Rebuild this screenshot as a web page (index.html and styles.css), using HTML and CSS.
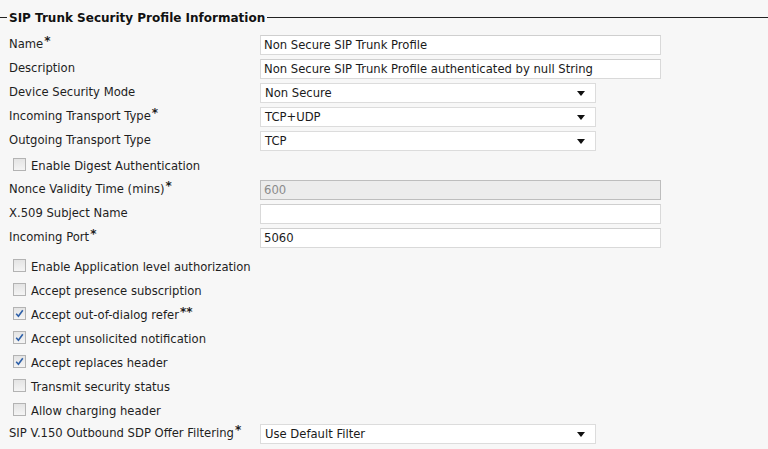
FILE: index.html
```html
<!DOCTYPE html>
<html>
<head>
<meta charset="utf-8">
<link rel="stylesheet" href="styles.css">
</head>
<body>
<div class="page">
  <div class="legend">
    <span class="lead-line"></span>
    <span class="legend-text">SIP Trunk Security Profile Information</span>
    <span class="fill-line"></span>
  </div>
  <div class="form">
    <div class="row r-field">
      <div class="label">Name<sup>*</sup></div>
      <div class="input">Non Secure SIP Trunk Profile</div>
    </div>
    <div class="row r-field">
      <div class="label">Description</div>
      <div class="input">Non Secure SIP Trunk Profile authenticated by null String</div>
    </div>
    <div class="row r-field">
      <div class="label">Device Security Mode</div>
      <div class="select"><span>Non Secure</span><i class="arrow"></i></div>
    </div>
    <div class="row r-field">
      <div class="label">Incoming Transport Type<sup>*</sup></div>
      <div class="select"><span>TCP+UDP</span><i class="arrow"></i></div>
    </div>
    <div class="row r-field">
      <div class="label">Outgoing Transport Type</div>
      <div class="select"><span>TCP</span><i class="arrow"></i></div>
    </div>
    <div class="row r-check r-digest">
      <span class="cb"></span><span class="cb-text">Enable Digest Authentication</span>
    </div>
    <div class="row r-field">
      <div class="label">Nonce Validity Time (mins)<sup>*</sup></div>
      <div class="input disabled">600</div>
    </div>
    <div class="row r-field">
      <div class="label">X.509 Subject Name</div>
      <div class="input"></div>
    </div>
    <div class="row r-field">
      <div class="label">Incoming Port<sup>*</sup></div>
      <div class="input">5060</div>
    </div>
    <div class="checks">
      <div class="row r-check"><span class="cb"></span><span class="cb-text">Enable Application level authorization</span></div>
      <div class="row r-check"><span class="cb"></span><span class="cb-text">Accept presence subscription</span></div>
      <div class="row r-check"><span class="cb checked"><svg viewBox="0 0 13 13" width="13" height="13"><path d="M3.2 6.8 L5.4 9.2 L9.8 3.2" fill="none" stroke="#2d5fa8" stroke-width="1.6"/></svg></span><span class="cb-text">Accept out-of-dialog refer<sup>**</sup></span></div>
      <div class="row r-check"><span class="cb checked"><svg viewBox="0 0 13 13" width="13" height="13"><path d="M3.2 6.8 L5.4 9.2 L9.8 3.2" fill="none" stroke="#2d5fa8" stroke-width="1.6"/></svg></span><span class="cb-text">Accept unsolicited notification</span></div>
      <div class="row r-check"><span class="cb checked"><svg viewBox="0 0 13 13" width="13" height="13"><path d="M3.2 6.8 L5.4 9.2 L9.8 3.2" fill="none" stroke="#2d5fa8" stroke-width="1.6"/></svg></span><span class="cb-text">Accept replaces header</span></div>
      <div class="row r-check"><span class="cb"></span><span class="cb-text">Transmit security status</span></div>
      <div class="row r-check"><span class="cb"></span><span class="cb-text">Allow charging header</span></div>
    </div>
    <div class="row r-last">
      <div class="label">SIP V.150 Outbound SDP Offer Filtering<sup>*</sup></div>
      <div class="select"><span>Use Default Filter</span><i class="arrow"></i></div>
    </div>
  </div>
</div>
</body>
</html>
```
FILE: styles.css
```css
html, body {
  margin: 0;
  padding: 0;
  background: #f7f7f7;
}
body {
  width: 768px;
  height: 449px;
  overflow: hidden;
  font-family: "DejaVu Sans", Verdana, sans-serif;
  font-size: 11.6px;
  color: #1e1e1e;
}
.page {
  padding-top: 9px;
}
.legend {
  display: flex;
  align-items: center;
  height: 17px;
}
.lead-line {
  width: 7px;
  height: 1px;
  background: #222;
  margin-right: 2px;
}
.legend-text {
  font-weight: bold;
  font-size: 12px;
  color: #111;
  margin-right: 2px;
}
.fill-line {
  flex: 1;
  height: 1px;
  background: #222;
}
.form {
  padding-top: 7px;
}
.row {
  display: flex;
  align-items: center;
}
.r-field {
  height: 24px;
}
.label {
  width: 260px;
  padding-left: 9px;
  box-sizing: border-box;
  flex: none;
  white-space: nowrap;
  padding-bottom: 3px;
}
sup {
  font-size: 12px;
  font-weight: bold;
  vertical-align: 3px;
  line-height: 0;
  margin-left: 1px;
}
.input {
  width: 401px;
  height: 20px;
  box-sizing: border-box;
  background: #fff;
  border: 1px solid #d9d9d9;
  border-top-color: #cfcfcf;
  padding: 0 3px;
  line-height: 18px;
  color: #1a1a1a;
  white-space: nowrap;
  overflow: hidden;
}
.input.disabled {
  background: #ececec;
  border-color: #bdbdbd;
  color: #8a8a8a;
}
.select {
  width: 336px;
  height: 20px;
  box-sizing: border-box;
  background: #fff;
  border: 1px solid #dcdcdc;
  display: flex;
  align-items: center;
  justify-content: space-between;
  padding: 0 10px 0 4px;
  color: #1a1a1a;
}
.arrow {
  width: 0;
  height: 0;
  border-left: 4px solid transparent;
  border-right: 4px solid transparent;
  border-top: 5px solid #111;
}
.r-check {
  height: 24px;
  padding-left: 13px;
}
.r-digest {
  height: 24px;
  margin-top: 1px;
}
.checks {
  padding-top: 5px;
}
.cb {
  width: 13px;
  height: 13px;
  box-sizing: border-box;
  border: 1px solid #b3b3b3;
  background: linear-gradient(#e4e4e4, #f4f4f4);
  flex: none;
  margin-right: 5px;
  position: relative;
  margin-top: -4px;
}
.cb svg {
  position: absolute;
  left: -1px;
  top: -1px;
}
.r-last {
  height: 22px;
}
```
